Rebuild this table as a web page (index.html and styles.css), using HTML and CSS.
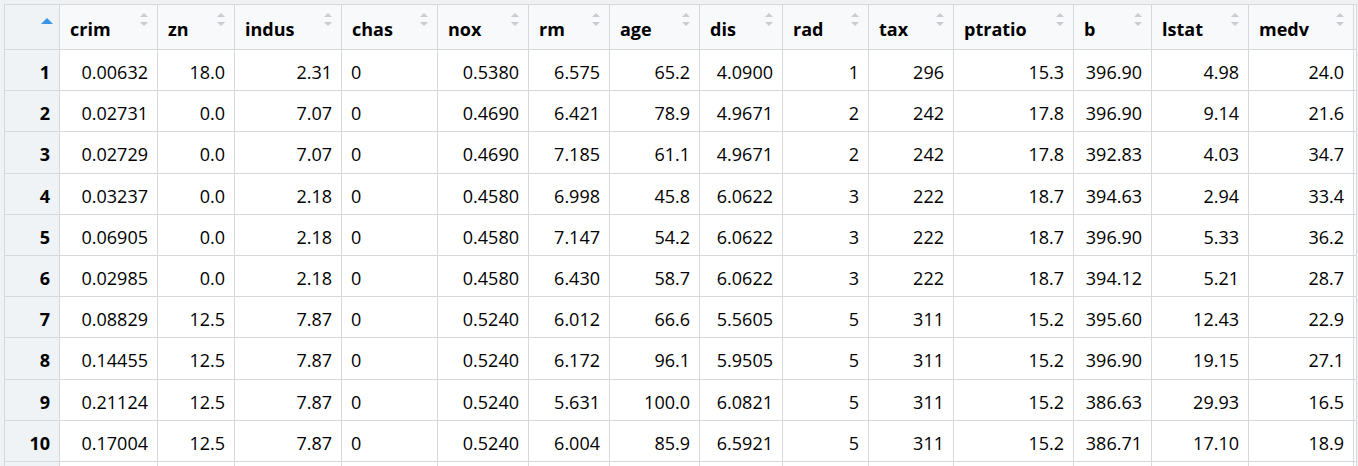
FILE: index.html
```html
<!DOCTYPE html>
<html lang="en">
<head>
<meta charset="utf-8">
<title>Boston data viewer</title>
<link rel="stylesheet" href="styles.css">
</head>
<body>
<div class="viewer">
<table class="grid">
<thead>
<tr>
<th class="rn sorted"></th>
<th class="c-crim sortable">crim</th>
<th class="c-zn sortable">zn</th>
<th class="c-indus sortable">indus</th>
<th class="c-chas sortable">chas</th>
<th class="c-nox sortable">nox</th>
<th class="c-rm sortable">rm</th>
<th class="c-age sortable">age</th>
<th class="c-dis sortable">dis</th>
<th class="c-rad sortable">rad</th>
<th class="c-tax sortable">tax</th>
<th class="c-ptratio sortable">ptratio</th>
<th class="c-b sortable">b</th>
<th class="c-lstat sortable">lstat</th>
<th class="c-medv sortable">medv</th>
<th class="c-extra"></th>
</tr>
</thead>
<tbody>
<tr><td class="rn">1</td><td>0.00632</td><td>18.0</td><td>2.31</td><td class="txt">0</td><td>0.5380</td><td>6.575</td><td>65.2</td><td>4.0900</td><td>1</td><td>296</td><td>15.3</td><td>396.90</td><td>4.98</td><td>24.0</td><td></td></tr>
<tr><td class="rn">2</td><td>0.02731</td><td>0.0</td><td>7.07</td><td class="txt">0</td><td>0.4690</td><td>6.421</td><td>78.9</td><td>4.9671</td><td>2</td><td>242</td><td>17.8</td><td>396.90</td><td>9.14</td><td>21.6</td><td></td></tr>
<tr><td class="rn">3</td><td>0.02729</td><td>0.0</td><td>7.07</td><td class="txt">0</td><td>0.4690</td><td>7.185</td><td>61.1</td><td>4.9671</td><td>2</td><td>242</td><td>17.8</td><td>392.83</td><td>4.03</td><td>34.7</td><td></td></tr>
<tr><td class="rn">4</td><td>0.03237</td><td>0.0</td><td>2.18</td><td class="txt">0</td><td>0.4580</td><td>6.998</td><td>45.8</td><td>6.0622</td><td>3</td><td>222</td><td>18.7</td><td>394.63</td><td>2.94</td><td>33.4</td><td></td></tr>
<tr><td class="rn">5</td><td>0.06905</td><td>0.0</td><td>2.18</td><td class="txt">0</td><td>0.4580</td><td>7.147</td><td>54.2</td><td>6.0622</td><td>3</td><td>222</td><td>18.7</td><td>396.90</td><td>5.33</td><td>36.2</td><td></td></tr>
<tr><td class="rn">6</td><td>0.02985</td><td>0.0</td><td>2.18</td><td class="txt">0</td><td>0.4580</td><td>6.430</td><td>58.7</td><td>6.0622</td><td>3</td><td>222</td><td>18.7</td><td>394.12</td><td>5.21</td><td>28.7</td><td></td></tr>
<tr><td class="rn">7</td><td>0.08829</td><td>12.5</td><td>7.87</td><td class="txt">0</td><td>0.5240</td><td>6.012</td><td>66.6</td><td>5.5605</td><td>5</td><td>311</td><td>15.2</td><td>395.60</td><td>12.43</td><td>22.9</td><td></td></tr>
<tr><td class="rn">8</td><td>0.14455</td><td>12.5</td><td>7.87</td><td class="txt">0</td><td>0.5240</td><td>6.172</td><td>96.1</td><td>5.9505</td><td>5</td><td>311</td><td>15.2</td><td>396.90</td><td>19.15</td><td>27.1</td><td></td></tr>
<tr><td class="rn">9</td><td>0.21124</td><td>12.5</td><td>7.87</td><td class="txt">0</td><td>0.5240</td><td>5.631</td><td>100.0</td><td>6.0821</td><td>5</td><td>311</td><td>15.2</td><td>386.63</td><td>29.93</td><td>16.5</td><td></td></tr>
<tr><td class="rn">10</td><td>0.17004</td><td>12.5</td><td>7.87</td><td class="txt">0</td><td>0.5240</td><td>6.004</td><td>85.9</td><td>6.5921</td><td>5</td><td>311</td><td>15.2</td><td>386.71</td><td>17.10</td><td>18.9</td><td></td></tr>
<tr class="stub"><td class="rn"></td><td></td><td></td><td></td><td></td><td></td><td></td><td></td><td></td><td></td><td></td><td></td><td></td><td></td><td></td><td></td></tr>
</tbody>
</table>
</div>
</body>
</html>
```

FILE: styles.css
```css
html, body {
  margin: 0;
  padding: 0;
  background: #eff1f2;
  overflow: hidden;
  height: 466px;
}

.viewer {
  padding: 4px 0 0 4px;
}

.grid {
  border-collapse: separate;
  border-spacing: 0;
  table-layout: fixed;
  width: 1352px;
  background: #ffffff;
  border-top: 1px solid #d6d9dc;
  border-left: 1px solid #d6d9dc;
  font-family: "Open Sans", "Noto Sans", sans-serif;
  font-size: 18px;
  color: #000;
}

.grid th,
.grid td {
  box-sizing: border-box;
  border-right: 1px solid #d6d9dc;
  border-bottom: 1px solid #d6d9dc;
  padding: 4px 9px 0;
  white-space: nowrap;
  overflow: hidden;
  vertical-align: middle;
  line-height: 24px;
}

.grid th {
  height: 45px;
  text-align: left;
  font-weight: 700;
  background: #f8f9fa;
  position: relative;
  padding-left: 10px;
}

.grid td {
  height: 41.2px;
  text-align: right;
  font-weight: 400;
}

.grid td.txt {
  text-align: left;
}

.grid .rn {
  background: #eff3f6;
  font-weight: 700;
  text-align: right;
}

.grid .stub td {
  height: 4px;
  padding: 0;
  line-height: 4px;
  border-bottom: 0;
}

.grid th.rn { width: 55px; }
.c-crim { width: 98px; }
.c-zn { width: 77px; }
.c-indus { width: 107px; }
.c-chas { width: 96px; }
.c-nox { width: 91px; }
.c-rm { width: 81px; }
.c-age { width: 90px; }
.c-dis { width: 83px; }
.c-rad { width: 86px; }
.c-tax { width: 85px; }
.c-ptratio { width: 120px; }
.c-b { width: 78px; }
.c-lstat { width: 97px; }
.c-medv { width: 105px; }
.grid th.c-extra { width: 3px; padding: 0; }

/* sort indicators */
.sortable::before,
.sortable::after {
  content: "";
  position: absolute;
  right: 9px;
  width: 0;
  height: 0;
  border-left: 4px solid transparent;
  border-right: 4px solid transparent;
}

.sortable::before {
  top: 8px;
  border-bottom: 4px solid #c9ccd0;
}

.sortable::after {
  top: 17px;
  border-top: 4px solid #c9ccd0;
}

.sorted::after {
  content: "";
  position: absolute;
  right: 6px;
  top: 13px;
  width: 0;
  height: 0;
  border-left: 6px solid transparent;
  border-right: 6px solid transparent;
  border-bottom: 6px solid #3a95e4;
}
```
